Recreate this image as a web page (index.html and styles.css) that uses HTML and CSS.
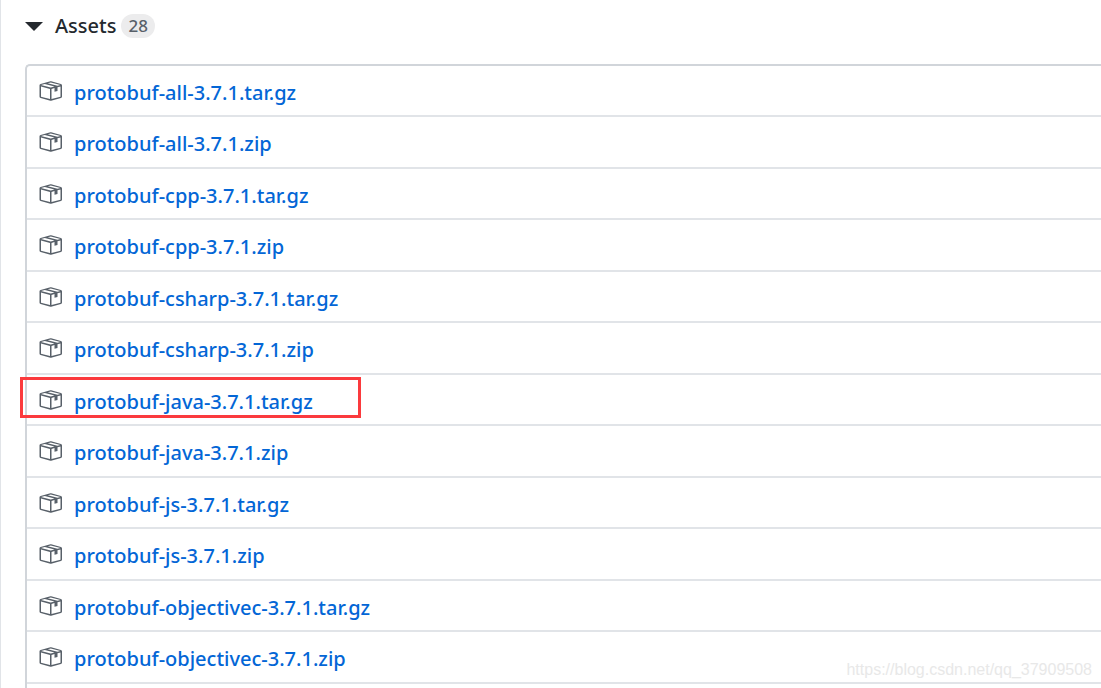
FILE: index.html
```
<!DOCTYPE html>
<html lang="en">

<head>
    <meta charset="UTF-8">
    <meta name="viewport" content="width=device-width, initial-scale=1.0">
    <title>Assets</title>
    <link rel="stylesheet" href="styles.css">
</head>

<body>

    <!-- Shared package icon -->
    <svg class="sprite" aria-hidden="true">
        <symbol id="package" viewBox="0 0 16 16">
            <path fill-rule="evenodd" d="M1 4.27v7.47c0 .45.3.84.75.97l6.5 1.73c.16.05.34.05.5 0l6.5-1.73c.45-.13.75-.52.75-.97V4.27c0-.45-.3-.84-.75-.97l-6.5-1.74a1.4 1.4 0 0 0-.5 0L1.75 3.3c-.45.13-.75.52-.75.97zm7 9.09l-6-1.59V5l6 1.61v6.75zM2 4l2.5-.67L11 5.06l-2.5.67L2 4zm13 7.77l-6 1.59V6.61l2-.55V8.5l2-.53V5.53L15 5v6.77zm-2-7.24L6.5 2.8l2-.53L15 4l-2 .53z"/>
        </symbol>
    </svg>

    <main>
        <details class="assets" open>
            <summary>
                <span class="caret"></span>
                <span class="title">Assets</span>
                <span class="counter">28</span>
            </summary>

            <ul class="asset-list">
                <li><svg class="icon"><use href="#package"/></svg><a href="#">protobuf-all-3.7.1.tar.gz</a></li>
                <li><svg class="icon"><use href="#package"/></svg><a href="#">protobuf-all-3.7.1.zip</a></li>
                <li><svg class="icon"><use href="#package"/></svg><a href="#">protobuf-cpp-3.7.1.tar.gz</a></li>
                <li><svg class="icon"><use href="#package"/></svg><a href="#">protobuf-cpp-3.7.1.zip</a></li>
                <li><svg class="icon"><use href="#package"/></svg><a href="#">protobuf-csharp-3.7.1.tar.gz</a></li>
                <li><svg class="icon"><use href="#package"/></svg><a href="#">protobuf-csharp-3.7.1.zip</a></li>
                <li class="marked"><svg class="icon"><use href="#package"/></svg><a href="#">protobuf-java-3.7.1.tar.gz</a></li>
                <li><svg class="icon"><use href="#package"/></svg><a href="#">protobuf-java-3.7.1.zip</a></li>
                <li><svg class="icon"><use href="#package"/></svg><a href="#">protobuf-js-3.7.1.tar.gz</a></li>
                <li><svg class="icon"><use href="#package"/></svg><a href="#">protobuf-js-3.7.1.zip</a></li>
                <li><svg class="icon"><use href="#package"/></svg><a href="#">protobuf-objectivec-3.7.1.tar.gz</a></li>
                <li><svg class="icon"><use href="#package"/></svg><a href="#">protobuf-objectivec-3.7.1.zip</a></li>
                <li></li>
            </ul>
        </details>
    </main>

    <div class="watermark">https://blog.csdn.net/qq_37909508</div>

</body>

</html>
```

FILE: styles.css
```
* {
    margin: 0;
    padding: 0;
    box-sizing: border-box;
}

body {
    font-family: 'Noto Sans', 'Open Sans', sans-serif;
    font-size: 20px;
    line-height: 28px;
    color: #24292e;
    background-color: #fff;
    height: 100vh;
    overflow: hidden;
}

.sprite {
    display: none;
}

main {
    height: 100%;
    overflow: hidden;
    padding: 12px 0 0 24px;
    border-left: 1px solid #e1e4e8;
}

summary {
    display: flex;
    align-items: center;
    list-style: none;
    cursor: pointer;
}

summary::-webkit-details-marker {
    display: none;
}

.caret {
    border: 9px solid transparent;
    border-top-color: #24292e;
    border-bottom: 0;
    margin-right: 12px;
}

.title {
    font-weight: 500;
}

.counter {
    margin-left: 5px;
    padding: 0 7px;
    border-radius: 12px;
    background-color: #ececed;
    color: #586069;
    font-size: 17px;
    font-weight: 500;
    line-height: 24px;
}

.asset-list {
    margin-top: 24px;
    list-style: none;
    border: 2px solid #d1d5da;
    border-right: 0;
    border-top-left-radius: 5px;
}

.asset-list li {
    position: relative;
    display: flex;
    align-items: center;
    gap: 12px;
    height: 51px;
    padding: 4px 11px 0;
    border-bottom: 2px solid #e1e4e8;
}

.asset-list li:nth-child(even) {
    height: 52px;
}

.icon {
    width: 24px;
    height: 24px;
    margin-bottom: 4px;
    fill: #586069;
}

.asset-list a {
    color: #0366d6;
    font-weight: 500;
    text-decoration: none;
}

.asset-list a:hover {
    text-decoration: underline;
}

/* Red frame round the file to download */
.marked::after {
    content: '';
    position: absolute;
    top: 2px;
    left: -7px;
    box-sizing: border-box;
    width: 341px;
    height: 41px;
    border: 3px solid #fb3a3d;
    pointer-events: none;
}

.watermark {
    position: absolute;
    right: 9px;
    bottom: 7px;
    font-family: 'Liberation Sans', sans-serif;
    font-size: 16px;
    line-height: 22px;
    color: #e8e8e8;
}
```
